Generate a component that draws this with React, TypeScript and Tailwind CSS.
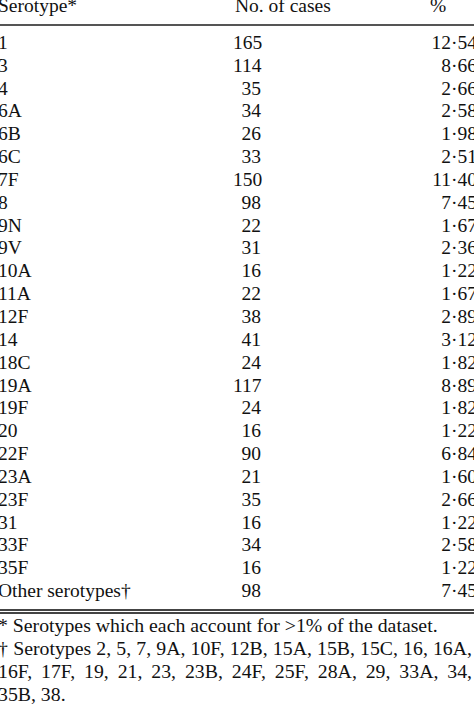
import React from 'react';

const rows: [string, string, string][] = [
  ['1', '165', '12·54'],
  ['3', '114', '8·66'],
  ['4', '35', '2·66'],
  ['6A', '34', '2·58'],
  ['6B', '26', '1·98'],
  ['6C', '33', '2·51'],
  ['7F', '150', '11·40'],
  ['8', '98', '7·45'],
  ['9N', '22', '1·67'],
  ['9V', '31', '2·36'],
  ['10A', '16', '1·22'],
  ['11A', '22', '1·67'],
  ['12F', '38', '2·89'],
  ['14', '41', '3·12'],
  ['18C', '24', '1·82'],
  ['19A', '117', '8·89'],
  ['19F', '24', '1·82'],
  ['20', '16', '1·22'],
  ['22F', '90', '6·84'],
  ['23A', '21', '1·60'],
  ['23F', '35', '2·66'],
  ['31', '16', '1·22'],
  ['33F', '34', '2·58'],
  ['35F', '16', '1·22'],
  ['Other serotypes†', '98', '7·45'],
];

export default function App() {
  return (
    <div className="w-[474px] h-[713px] overflow-hidden bg-white text-[#111] font-['Liberation_Serif',serif] text-[19.5px]">
      <div className="w-[479px] -ml-[2px]">
        {/* header */}
        <div className="flex leading-[22.85px] -mt-[5px]">
          <span className="w-[237px]">Serotype*</span>
          <span className="w-[195px]">No. of cases</span>
          <span>%</span>
        </div>
        <div className="mt-[6.5px] h-[2px] bg-[#555]" />

        {/* body */}
        <div className="mt-[5.5px]">
          {rows.map(([label, n, pct]) => (
            <div key={label} className="flex h-[22.85px] leading-[22.85px] whitespace-nowrap">
              <span className="w-[235px]">{label}</span>
              <span className="w-[28px] text-right">{n}</span>
              <span className="flex-1 text-right">{pct}</span>
            </div>
          ))}
        </div>

        {/* double rule */}
        <div className="mt-[6.5px] h-[1.5px] bg-[#444]" />
        <div className="mt-[1.5px] h-[1.5px] bg-[#444]" />

        {/* footnotes */}
        <div className="leading-[23px] mt-[0.5px] w-[474px] text-[19.8px]">
          <div className="whitespace-nowrap">* Serotypes which each account for &gt;1% of the dataset.</div>
          <div className="text-justify [text-align-last:justify] whitespace-nowrap">
            † Serotypes 2, 5, 7, 9A, 10F, 12B, 15A, 15B, 15C, 16, 16A,
          </div>
          <div className="text-justify [text-align-last:justify] whitespace-nowrap">
            16F, 17F, 19, 21, 23, 23B, 24F, 25F, 28A, 29, 33A, 34,
          </div>
          <div>35B, 38.</div>
        </div>
      </div>
    </div>
  );
}
